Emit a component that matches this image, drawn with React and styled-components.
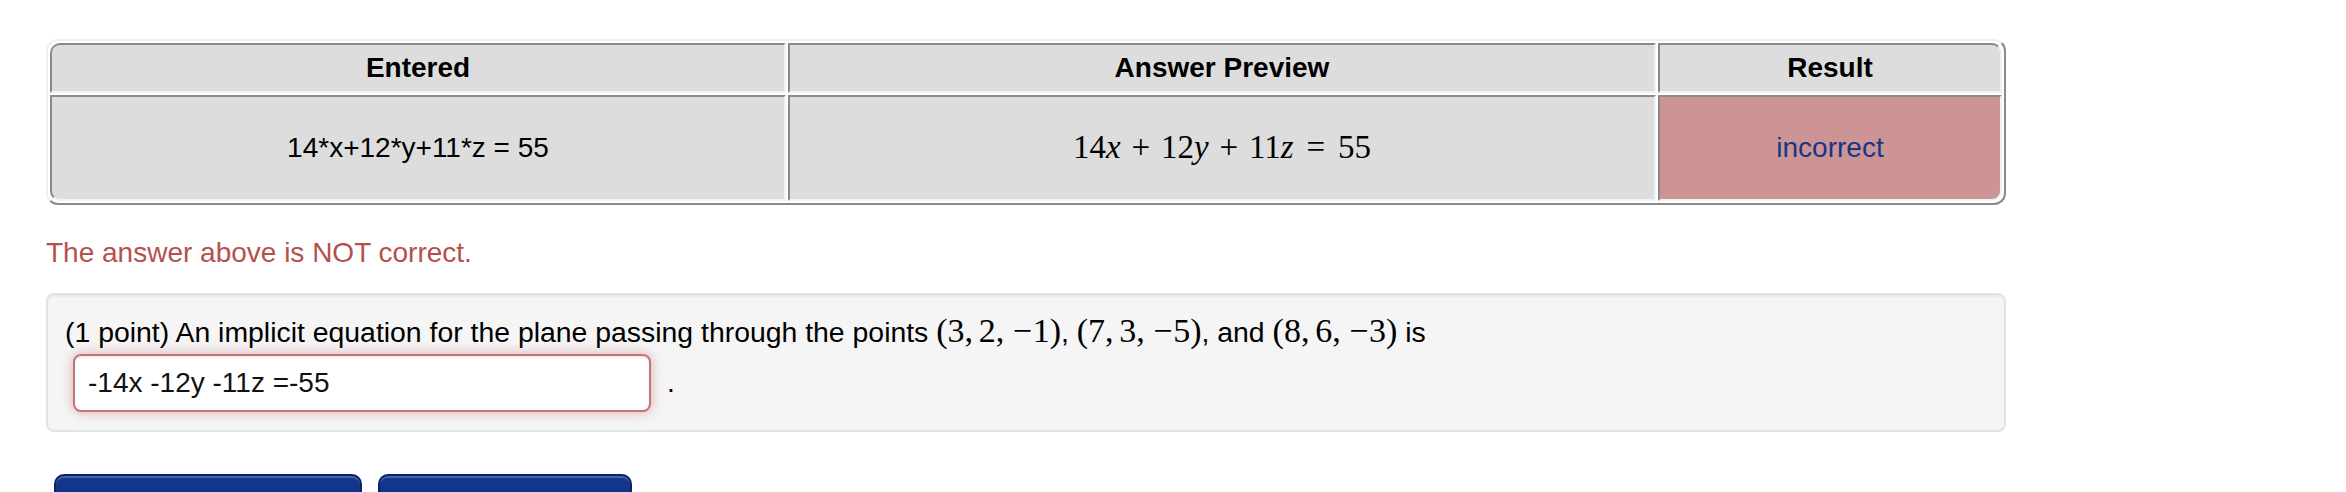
import React from "react";
import styled, { createGlobalStyle } from "styled-components";

const GlobalStyle = createGlobalStyle`
  html, body {
    margin: 0;
    padding: 0;
    background: #ffffff;
    font-family: "Liberation Sans", Arial, Helvetica, sans-serif;
    color: #000;
  }
`;

const Page = styled.div`
  padding: 39px 0 0 46px;
  width: 1960px;
`;

const Results = styled.table`
  width: 1960px;
  table-layout: fixed;
  border-collapse: separate;
  border-spacing: 2px;
  border: 2px solid;
  border-color: #f0f0f0 #8a8a8a #8a8a8a #f0f0f0;
  border-radius: 12px;
  font-size: 28px;

  thead tr > :first-child { border-top-left-radius: 10px; }
  thead tr > :last-child { border-top-right-radius: 10px; }
  tbody tr > :first-child { border-bottom-left-radius: 10px; }
  tbody tr > :last-child { border-bottom-right-radius: 10px; }
`;

const Head = styled.th`
  width: ${p => p.$w}px;
  height: 50px;
  box-sizing: border-box;
  padding: 0 10px;
  background: #dddddd;
  border: 2px solid;
  border-color: #8a8a8a #f2f2f2 #f2f2f2 #8a8a8a;
  font-weight: bold;
  text-align: center;
  vertical-align: middle;
`;

const Cell = styled.td`
  height: 106px;
  box-sizing: border-box;
  padding: 0 10px;
  background: ${p => p.$bg || "#dddddd"};
  color: ${p => p.$color || "#000"};
  border: 2px solid;
  border-color: #8a8a8a #f2f2f2 #f2f2f2 #8a8a8a;
  text-align: center;
  vertical-align: middle;
`;

const Math = styled.span`
  font-family: "Liberation Serif", "Times New Roman", "DejaVu Serif", serif;
  font-size: ${p => p.$size || 34}px;
  line-height: 1;
  white-space: nowrap;
`;

const Mi = styled.i`
  font-style: italic;
`;

const Mo = styled.span`
  margin: 0 ${p => p.$space}em;
`;

const Comma = styled.span`
  margin-right: 0.17em;
`;

const Minus = styled.span`
  padding: 0 0.02em 0 0.08em;
`;

const ErrorMsg = styled.div`
  margin-top: 28px;
  font-size: 28px;
  line-height: 40px;
  color: #b5504d;
`;

const Problem = styled.div`
  margin-top: 20px;
  box-sizing: border-box;
  width: 1960px;
  padding: 19px 20px 18px 17px;
  background: #f5f5f5;
  border: 2px solid #e3e3e3;
  border-radius: 8px;
  box-shadow: inset 0 2px 2px rgba(0, 0, 0, 0.05);
  font-size: 28.4px;
`;

const Prompt = styled.div`
  line-height: 35px;
  white-space: nowrap;
`;

const AnswerRow = styled.div`
  display: flex;
  align-items: baseline;
  margin-top: 4px;
  padding-left: 8px;
`;

const AnswerInput = styled.input`
  box-sizing: border-box;
  width: 578px;
  height: 58px;
  padding: 0 13px;
  font-family: "Liberation Sans", Arial, Helvetica, sans-serif;
  font-size: 28px;
  color: #111;
  background: #ffffff;
  border: 2px solid #c47474;
  border-radius: 8px;
  box-shadow: inset 0 2px 2px rgba(0, 0, 0, 0.075), 0 0 12px rgba(200, 110, 110, 0.55);
  outline: none;
`;

const Period = styled.span`
  margin-left: 16px;
  font-size: 28px;
`;

const Buttons = styled.div`
  display: flex;
  gap: 16px;
  margin-top: 42px;
  padding-left: 8px;
`;

const Button = styled.button`
  box-sizing: border-box;
  width: ${p => p.$w}px;
  height: 60px;
  padding: 0;
  font-family: "Liberation Sans", Arial, Helvetica, sans-serif;
  font-size: 28px;
  color: #ffffff;
  background: linear-gradient(to bottom, #14388f, #0a2a80);
  border: 2px solid #082467;
  border-radius: 10px;
  box-shadow: inset 0 2px 0 rgba(255, 255, 255, 0.22);
`;

const Point = ({ a, b, c }) => (
  <Math>
    ({a}<Comma>,</Comma>{b}<Comma>,</Comma><Minus>−</Minus>{c})
  </Math>
);

export default function App() {
  return (
    <>
      <GlobalStyle />
      <Page>
        <Results>
          <thead>
            <tr>
              <Head $w={736}>Entered</Head>
              <Head $w={868}>Answer Preview</Head>
              <Head $w={344}>Result</Head>
            </tr>
          </thead>
          <tbody>
            <tr>
              <Cell>14*x+12*y+11*z = 55</Cell>
              <Cell>
                <Math $size={33}>
                  14<Mi>x</Mi>
                  <Mo $space={0.33}>+</Mo>
                  12<Mi>y</Mi>
                  <Mo $space={0.33}>+</Mo>
                  11<Mi>z</Mi>
                  <Mo $space={0.39}>=</Mo>
                  55
                </Math>
              </Cell>
              <Cell $bg="#cc9494" $color="#163686">incorrect</Cell>
            </tr>
          </tbody>
        </Results>

        <ErrorMsg>The answer above is NOT correct.</ErrorMsg>

        <Problem>
          <Prompt>
            (1 point) An implicit equation for the plane passing through the points{" "}
            <Point a="3" b="2" c="1" />, <Point a="7" b="3" c="5" />, and{" "}
            <Point a="8" b="6" c="3" /> is
          </Prompt>
          <AnswerRow>
            <AnswerInput type="text" defaultValue="-14x -12y -11z =-55" />
            <Period>.</Period>
          </AnswerRow>
        </Problem>

        <Buttons>
          <Button $w={308}>Preview My Answers</Button>
          <Button $w={254}>Submit Answers</Button>
        </Buttons>
      </Page>
    </>
  );
}
